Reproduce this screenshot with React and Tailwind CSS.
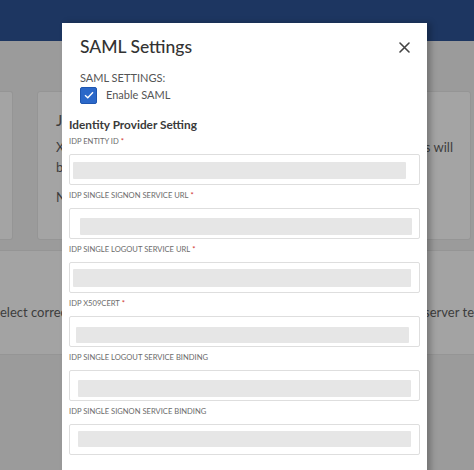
import React from "react";

const fields = [
  { label: "IDP Entity ID", req: true, bar: "ml-[3px] mr-[13px] mt-[7px] h-[17px]", first: true },
  { label: "IDP Single Signon Service URL", req: true, bar: "ml-[10px] mr-[7px] mt-[9px] h-[17px]" },
  { label: "IDP Single Logout Service URL", req: true, bar: "ml-[3px] mr-[8px] mt-[6px] h-[18px]" },
  { label: "IDP X509Cert", req: true, bar: "ml-[6px] mr-[10px] mt-[10px] h-[16px]" },
  { label: "IDP Single Logout Service Binding", req: false, bar: "ml-[8px] mr-[8px] mt-[9px] h-[17px]" },
  { label: "IDP Single Signon Service Binding", req: false, bar: "ml-[8px] mr-[8px] mt-[6px] h-[16px]" },
];

const Field = ({ f }) => (
  <div className={f.first ? "mt-[2px]" : "mt-[4px]"}>
    <div className="h-[14px] flex items-center text-[7.6px] uppercase text-[#6b6b6b]">
      {f.label}
      {f.req && <span className="ml-[2px] text-[#d0312d]">*</span>}
    </div>
    <div className="mt-[5px] h-[31px] border border-[#dedede] rounded-[2px] bg-white">
      <div className={"rounded-[1px] bg-[#e6e6e6] " + f.bar}></div>
    </div>
  </div>
);

const App = () => {
  return (
    <div className="relative w-[474px] h-[470px] overflow-hidden bg-[#9b9b9b] font-['Lato',sans-serif] text-[#3d3d3d]">
      {/* page behind the dialog */}
      <div className="h-[41px] bg-[#1d3661]"></div>
      <div className="flex gap-[24px] mt-[50px] h-[149px] pr-[3px]">
        <div className="w-[13px] bg-[#a4a4a4] border-y border-r border-[#959595] rounded-r-[3px]"></div>
        <div className="flex-1 bg-[#a4a4a4] border border-[#959595] rounded-[3px] pl-[18px] pr-[17px] pt-[19px] text-[13px]">
          <div className="text-[15px] leading-[18px]">J</div>
          <div className="mt-[8px] flex justify-between leading-[20px]">
            <span>Xo</span>
            <span>s will</span>
          </div>
          <div className="leading-[20px]">b</div>
          <div className="mt-[10px] leading-[20px]">N</div>
        </div>
      </div>
      <div className="mt-[10px] h-[105px] bg-[#a3a3a3] border-y border-[#959595] flex justify-between pt-[52px] text-[13px] whitespace-nowrap">
        <span>elect correct</span>
        <span>e server te</span>
      </div>

      {/* dialog */}
      <div className="absolute left-[62px] top-[23px] w-[365px] h-[480px] bg-white shadow-[4px_0_6px_rgba(0,0,0,0.25)]">
        <div className="h-[46px] flex items-center justify-between pl-[18px] pr-[17px] pt-[2px]">
          <h2 className="text-[17.5px] font-medium text-[#333]">SAML Settings</h2>
          <svg width="11" height="11" viewBox="0 0 11 11" className="mt-[1px]">
            <path d="M1 1 L10 10 M10 1 L1 10" stroke="#444" strokeWidth="1.6" strokeLinecap="round" />
          </svg>
        </div>
        <div className="pl-[18px] mt-[1px]">
          <div className="h-[16px] flex items-center text-[11px] text-[#555]">SAML SETTINGS:</div>
          <label className="h-[18px] flex items-center">
            <span className="w-[17px] h-[17px] rounded-[2px] bg-[#2b68c9] border border-[#1f56b0] flex items-center justify-center">
              <svg width="10" height="8" viewBox="0 0 10 8">
                <path d="M1 4.2 L3.8 6.8 L9 1.2" fill="none" stroke="#fff" strokeWidth="1.4" />
              </svg>
            </span>
            <span className="ml-[9px] text-[11px] text-[#555]">Enable SAML</span>
          </label>
        </div>
        <div className="px-[7px]">
          <div className="mt-[13px] h-[16px] flex items-center text-[11.8px] font-bold text-[#3a3a3a]">Identity Provider Setting</div>
          {fields.map((f) => (
            <Field key={f.label} f={f} />
          ))}
        </div>
      </div>
    </div>
  );
};

export default App;
